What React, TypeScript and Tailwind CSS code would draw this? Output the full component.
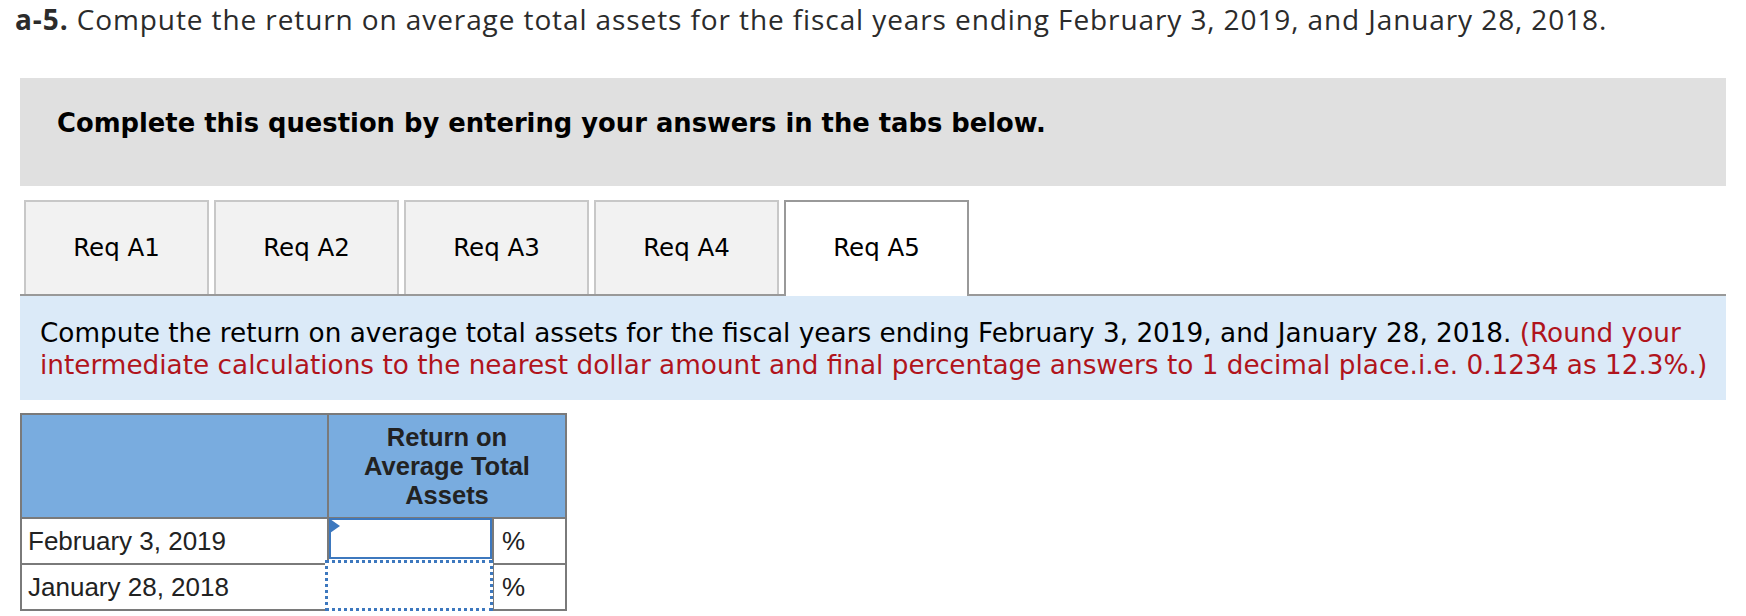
const tabs = ['Req A1', 'Req A2', 'Req A3', 'Req A4', 'Req A5'];

function Tab({ label, active }: { label: string; active: boolean }) {
  if (active) {
    return (
      <div className="relative z-10 -mb-[2px] flex h-[96px] w-[185px] items-center justify-center border-2 border-b-0 border-[#999999] bg-white pb-[2px]">
        <span className="text-[24.5px] text-black">{label}</span>
      </div>
    );
  }
  return (
    <div className="flex h-[94px] w-[185px] items-center justify-center border-2 border-b-0 border-[#c8c8c8] bg-[#f2f2f2]">
      <span className="text-[24.5px] text-black">{label}</span>
    </div>
  );
}

export default function App() {
  return (
    <div className="h-[616px] w-[1746px] overflow-hidden bg-white">
      <h1
        className="pl-[15px] text-[28px] leading-[38px] tracking-[0.9px] text-[#2b2b2b]"
        style={{ fontFamily: '"Open Sans", Lato, sans-serif' }}
      >
        <b className="font-bold">a-5.</b> Compute the return on average total assets for the fiscal years ending February 3, 2019, and January 28, 2018.
      </h1>

      <div className="mx-[20px]" style={{ fontFamily: '"DejaVu Sans", Verdana, sans-serif' }}>
        <div className="mt-[40px] h-[108px] bg-[#e0e0e0] pl-[37px] pt-[30px]">
          <p className="text-[25.8px] font-bold leading-[30px] text-black">
            Complete this question by entering your answers in the tabs below.
          </p>
        </div>

        <div className="mt-[14px] flex items-end gap-[5px] pl-[4px]">
          {tabs.map((t, i) => (
            <Tab key={t} label={t} active={i === 4} />
          ))}
        </div>

        <div className="h-[106px] overflow-hidden border-t-2 border-[#999999] bg-[#dbeaf8] pl-[20px] pt-[21px]">
          <p className="whitespace-nowrap text-[26.3px] leading-[32px] text-black">
            Compute the return on average total assets for the fiscal years ending February 3, 2019, and January 28, 2018.{' '}
            <span className="text-[#b0141c]">(Round your</span>
            <br />
            <span className="text-[#b0141c]">
              intermediate calculations to the nearest dollar amount and final percentage answers to 1 decimal place.i.e. 0.1234 as 12.3%.)
            </span>
          </p>
        </div>
      </div>

      <table
        className="ml-[20px] mt-[13px] border-collapse text-[26px] text-[#222222]"
        style={{ fontFamily: '"Liberation Sans", Arial, sans-serif' }}
      >
        <tbody>
          <tr className="h-[104px] bg-[#79acdf]">
            <td className="w-[307px] border-2 border-[#7a7a7a]"></td>
            <td colSpan={2} className="border-2 border-[#7a7a7a] text-center align-middle text-[25.5px] font-bold leading-[29px]">
              Return on
              <br />
              Average Total
              <br />
              Assets
            </td>
          </tr>
          <tr className="h-[46px]">
            <td className="border-2 border-[#7a7a7a] pl-[6px] leading-[30px]">February 3, 2019</td>
            <td className="relative w-[165px] border-2 border-[#7a7a7a] p-0">
              <div className="absolute inset-[0px] top-[-1px] bottom-[4px] border-2 border-[#3d78be] bg-white" />
              <div className="absolute left-[1px] top-[0px] h-0 w-0 border-y-[7px] border-l-[10px] border-y-transparent border-l-[#3d78be]" />
            </td>
            <td className="w-[73px] border-2 border-[#7a7a7a] pl-[8px]">%</td>
          </tr>
          <tr className="h-[46px]">
            <td className="border-2 border-[#7a7a7a] pl-[6px] leading-[30px]">January 28, 2018</td>
            <td className="relative border-2 border-[#7a7a7a] p-0">
              <div className="absolute -left-[4px] -right-[1px] -top-[5px] -bottom-[2px] border-[3px] border-dotted border-[#3d78be] bg-white" />
            </td>
            <td className="border-2 border-[#7a7a7a] pl-[8px]">%</td>
          </tr>
        </tbody>
      </table>
    </div>
  );
}
